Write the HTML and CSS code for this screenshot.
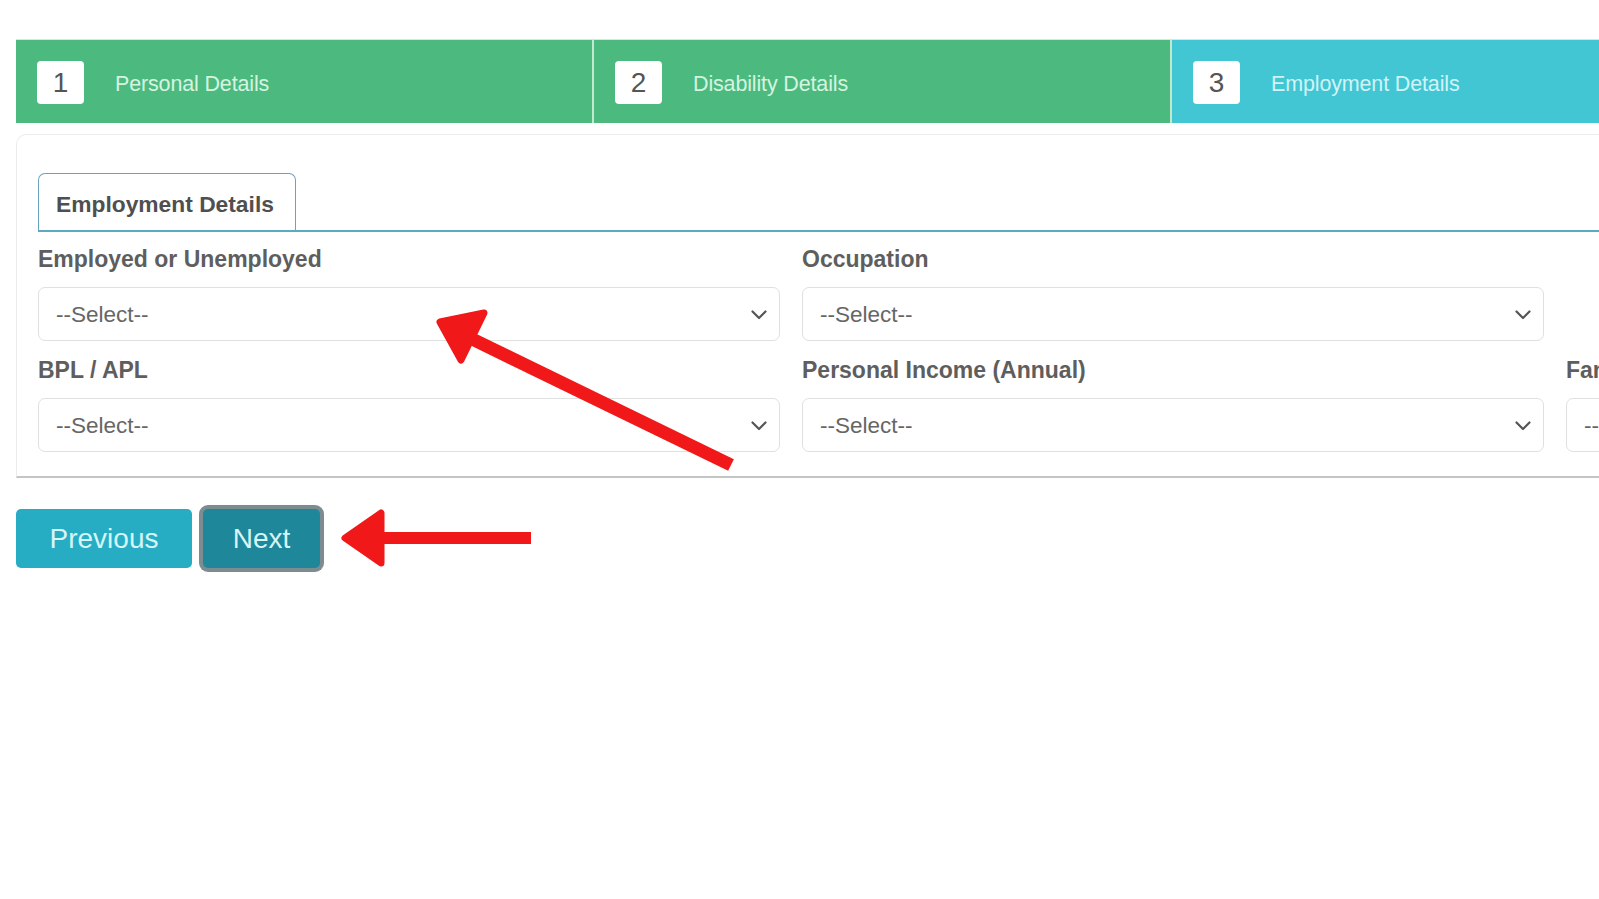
FILE: index.html
```html
<!DOCTYPE html>
<html lang="en">
<head>
<meta charset="utf-8">
<title>Employment Details</title>
<link rel="stylesheet" href="styles.css">
</head>
<body>
<div class="page">
  <div class="steps">
    <div class="step step-done">
      <span class="step-num">1</span>
      <span class="step-label">Personal Details</span>
    </div>
    <div class="step step-done">
      <span class="step-num">2</span>
      <span class="step-label">Disability Details</span>
    </div>
    <div class="step step-active">
      <span class="step-num">3</span>
      <span class="step-label">Employment Details</span>
    </div>
  </div>

  <div class="panel">
    <div class="tabs">
      <div class="tab">Employment Details</div>
    </div>
    <div class="form-grid">
      <div class="field">
        <label class="field-label">Employed or Unemployed</label>
        <div class="select"><span>--Select--</span><svg class="chev" viewBox="0 0 16 10" width="16" height="10"><path d="M1.5 1.5 L8 8 L14.5 1.5" fill="none" stroke="#555" stroke-width="2.2" stroke-linecap="round" stroke-linejoin="round"/></svg></div>
      </div>
      <div class="field">
        <label class="field-label">Occupation</label>
        <div class="select"><span>--Select--</span><svg class="chev" viewBox="0 0 16 10" width="16" height="10"><path d="M1.5 1.5 L8 8 L14.5 1.5" fill="none" stroke="#555" stroke-width="2.2" stroke-linecap="round" stroke-linejoin="round"/></svg></div>
      </div>
      <div class="field"></div>
      <div class="field">
        <label class="field-label">BPL / APL</label>
        <div class="select"><span>--Select--</span><svg class="chev" viewBox="0 0 16 10" width="16" height="10"><path d="M1.5 1.5 L8 8 L14.5 1.5" fill="none" stroke="#555" stroke-width="2.2" stroke-linecap="round" stroke-linejoin="round"/></svg></div>
      </div>
      <div class="field">
        <label class="field-label">Personal Income (Annual)</label>
        <div class="select"><span>--Select--</span><svg class="chev" viewBox="0 0 16 10" width="16" height="10"><path d="M1.5 1.5 L8 8 L14.5 1.5" fill="none" stroke="#555" stroke-width="2.2" stroke-linecap="round" stroke-linejoin="round"/></svg></div>
      </div>
      <div class="field">
        <label class="field-label">Family Income (Annual)</label>
        <div class="select"><span>--Select--</span><svg class="chev" viewBox="0 0 16 10" width="16" height="10"><path d="M1.5 1.5 L8 8 L14.5 1.5" fill="none" stroke="#555" stroke-width="2.2" stroke-linecap="round" stroke-linejoin="round"/></svg></div>
      </div>
    </div>
  </div>

  <div class="actions">
    <button class="btn btn-prev">Previous</button>
    <button class="btn btn-next">Next</button>
  </div>
</div>

<svg class="annotations" width="1599" height="899" viewBox="0 0 1599 899">
  <line x1="466" y1="336" x2="731" y2="465" stroke="#f01818" stroke-width="13"/>
  <polygon points="440,322 484,313 461,360" fill="#f01818" stroke="#f01818" stroke-width="7" stroke-linejoin="round"/>
  <line x1="376" y1="538" x2="531" y2="538" stroke="#f01818" stroke-width="12"/>
  <polygon points="345,538 381,513 381,563" fill="#f01818" stroke="#f01818" stroke-width="7" stroke-linejoin="round"/>
</svg>
</body>
</html>
```

FILE: styles.css
```css
html, body {
  margin: 0;
  padding: 0;
  background: #ffffff;
  overflow: hidden;
}

body {
  width: 1599px;
  height: 899px;
  font-family: "Liberation Sans", Arial, sans-serif;
  color: #555;
}

.page {
  width: 1760px;
  padding: 39px 0 0 16px;
  box-sizing: border-box;
}

.steps {
  display: flex;
  height: 84px;
  border-top: 1px solid #cfe9dc;
  box-sizing: border-box;
}

.step {
  flex: 0 0 578px;
  display: flex;
  align-items: center;
  padding-left: 21px;
  box-sizing: border-box;
  border-right: 2px solid #bfeacf;
}

.step-done {
  background: #4cba7e;
  color: #d4f4e0;
}

.step-active {
  background: #42c6d3;
  color: #cff4f7;
  flex-basis: 700px;
  border-right: none;
}

.step-num {
  width: 47px;
  height: 43px;
  background: #fff;
  border-radius: 4px;
  display: flex;
  align-items: center;
  justify-content: center;
  font-size: 28px;
  color: #555;
  margin-top: 2px;
}

.step-label {
  margin-left: 31px;
  font-size: 21.5px;
  letter-spacing: -0.15px;
  margin-top: 6px;
}

.panel {
  margin-top: 11px;
  border: 1px solid #ececec;
  border-bottom: 2px solid #c4c4c4;
  border-radius: 10px 0 0 0;
  padding: 38px 0 24px 21px;
  overflow: hidden;
  background: #fff;
}

.tabs {
  display: flex;
  border-bottom: 2px solid #5ea9c0;
}

.tab {
  width: 258px;
  height: 57px;
  box-sizing: border-box;
  border: 1.5px solid #6aa3c2;
  border-bottom: none;
  border-radius: 7px 7px 0 0;
  display: flex;
  align-items: center;
  padding-left: 17px;
  padding-top: 4px;
  font-weight: bold;
  font-size: 22.8px;
  color: #4f4f4f;
}

.form-grid {
  display: grid;
  grid-template-columns: repeat(3, 742px);
  column-gap: 22px;
  row-gap: 14px;
  margin-top: 12px;
}

.field {
  display: flex;
  flex-direction: column;
}

.field-label {
  font-weight: bold;
  font-size: 23px;
  line-height: 30px;
  color: #5e5e5e;
  margin-bottom: 13px;
}

.select {
  height: 54px;
  box-sizing: border-box;
  border: 1.5px solid #e0e0e0;
  border-radius: 7px;
  display: flex;
  align-items: center;
  justify-content: space-between;
  padding: 2px 12px 0 17px;
  font-size: 22.5px;
  color: #666;
}

.chev {
  display: block;
}

.actions {
  display: flex;
  align-items: center;
  gap: 11px;
  margin-top: 31px;
}

.btn {
  height: 59px;
  border: none;
  border-radius: 5px;
  font-family: "Liberation Sans", Arial, sans-serif;
  font-size: 28px;
  color: #d6f5f7;
  padding: 0;
  cursor: pointer;
}

.btn-prev {
  width: 176px;
  background: #27adc3;
}

.btn-next {
  width: 117px;
  background: #1f879a;
  box-shadow: 0 0 0 4px #7d8c90;
}

.annotations {
  position: absolute;
  left: 0;
  top: 0;
  pointer-events: none;
}
```
